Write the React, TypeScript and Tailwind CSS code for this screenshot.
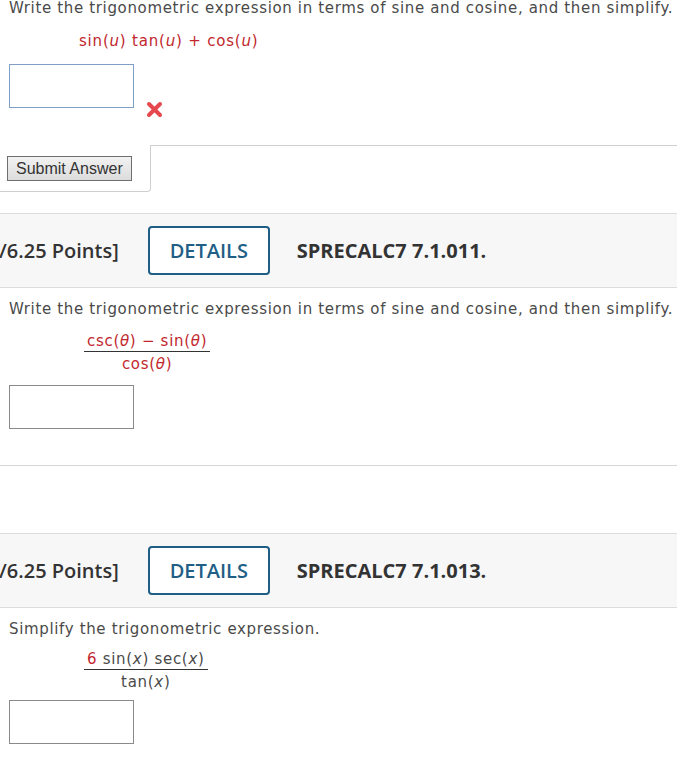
import React from 'react';

const body = { fontFamily: '"DejaVu Sans", Verdana, sans-serif' };
const head = { fontFamily: '"Open Sans", Arial, sans-serif' };

function AnswerBox({ blue }: { blue?: boolean }) {
  return (
    <div
      className={`w-[125px] h-[44px] bg-white border ${blue ? 'border-[#7f9fc7]' : 'border-[#8a8a8a]'}`}
    />
  );
}

function Fraction({ num, den }: { num: React.ReactNode; den: React.ReactNode }) {
  return (
    <div className="inline-flex flex-col items-center text-[15px] text-[#c1272d] tracking-[0.7px]">
      <div className="px-[3px] border-b border-[#333] leading-[19px]">{num}</div>
      <div className="leading-[22px] pt-[1px]">{den}</div>
    </div>
  );
}

function QuestionHeader({ code }: { code: string }) {
  return (
    <div className="h-[75px] bg-[#f7f7f7] border-y border-[#dcdcdc] flex items-center" style={head}>
      <span className="text-[20px] font-semibold text-[#333] -ml-[1px]">/6.25 Points]</span>
      <button className="ml-[29px] h-[49px] w-[122px] border-2 border-[#1f5f86] rounded-[4px] bg-white text-[20px] font-semibold text-[#1f5f86]">
        DETAILS
      </button>
      <span className="ml-[27px] text-[20px] font-bold text-[#333]">{code}</span>
    </div>
  );
}

export default function App() {
  return (
    <div className="w-[677px] h-[773px] overflow-hidden bg-white text-[#4a4a4a] tracking-[0.65px]" style={body}>
      {/* question 1 tail */}
      <div className="-mt-[2px] pl-[9px] text-[15px] leading-[20px] whitespace-nowrap">
        Write the trigonometric expression in terms of sine and cosine, and then simplify.
      </div>
      <div className="pl-[79px] pt-[13px] text-[15px] leading-[20px] text-[#c1272d] tracking-[0.8px]">
        sin(<i>u</i>) tan(<i>u</i>) + cos(<i>u</i>)
      </div>
      <div className="flex items-end pl-[9px] pt-[13px]">
        <AnswerBox blue />
        <svg className="ml-[12px] -mb-[10px]" width="17" height="17" viewBox="0 0 17 17">
          <path d="M3 3 L14 14 M14 3 L3 14" stroke="#e5484d" strokeWidth="4" strokeLinecap="round" />
        </svg>
      </div>
      <div className="flex mt-[37px]">
        <div className="w-[151px] h-[47px] border-r border-b border-[#cfcfcf] rounded-br-[4px] flex items-center pl-[7px]">
          <button
            className="h-[25px] px-[8px] border border-[#6f6f6f] bg-gradient-to-b from-[#f2f2f2] to-[#dcdcdc] text-[16px] text-[#333] tracking-normal"
            style={{ fontFamily: '"Liberation Sans", Arial, sans-serif' }}
          >
            Submit Answer
          </button>
        </div>
        <div className="flex-1 border-t border-[#cfcfcf]" />
      </div>

      {/* question 2 */}
      <div className="mt-[21px] tracking-normal">
        <QuestionHeader code="SPRECALC7 7.1.011." />
      </div>
      <div className="pl-[9px] pt-[11px] text-[15px] leading-[20px] whitespace-nowrap">
        Write the trigonometric expression in terms of sine and cosine, and then simplify.
      </div>
      <div className="pl-[84px] pt-[10px]">
        <Fraction
          num={<>csc(<i>θ</i>) − sin(<i>θ</i>)</>}
          den={<>cos(<i>θ</i>)</>}
        />
      </div>
      <div className="pl-[9px] pt-[10px]">
        <AnswerBox />
      </div>
      <div className="mt-[36px] border-t border-[#d6d6d6] h-[68px]" />

      {/* question 3 */}
      <div className="tracking-normal">
        <QuestionHeader code="SPRECALC7 7.1.013." />
      </div>
      <div className="pl-[9px] pt-[11px] text-[15px] leading-[20px]">
        Simplify the trigonometric expression.
      </div>
      <div className="pl-[84px] pt-[8px]">
        <Fraction
          num={<><span className="text-[#c1272d]">6</span><span className="text-[#4a4a4a]"> sin(<i>x</i>) sec(<i>x</i>)</span></>}
          den={<span className="text-[#4a4a4a]">tan(<i>x</i>)</span>}
        />
      </div>
      <div className="pl-[9px] pt-[7px]">
        <AnswerBox />
      </div>
    </div>
  );
}
